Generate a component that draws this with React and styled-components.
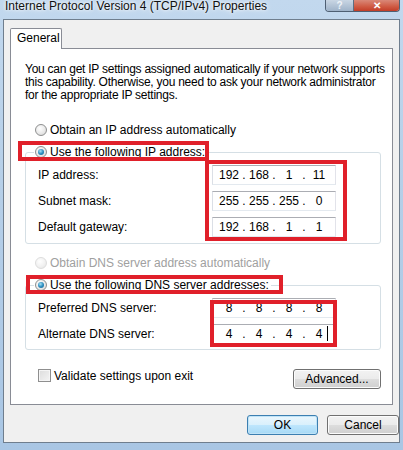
import React from 'react';
import styled, { createGlobalStyle, css } from 'styled-components';

const Global = createGlobalStyle`
  html, body { margin: 0; padding: 0; }
  body {
    width: 403px;
    height: 450px;
    overflow: hidden;
    font-family: "Liberation Sans", Arial, sans-serif;
    font-size: 12px;
    color: #000;
  }
`;

const Window = styled.div`
  width: 403px;
  height: 450px;
  box-sizing: border-box;
  display: flex;
  flex-direction: column;
  padding: 0 3px 7px 3px;
  background: linear-gradient(180deg, #c2d8ee 0%, #b6cfe8 40%, #a9c6e4 100%);
`;

const TitleBar = styled.div`
  height: 19px;
  display: flex;
  align-items: flex-start;
  justify-content: space-between;
  overflow: hidden;
`;

const Title = styled.div`
  margin-top: 0;
  margin-left: 2px;
  font-size: 12px;
  line-height: 13px;
  color: #111;
  white-space: nowrap;
  text-shadow: 0 0 6px #fff, 0 0 3px #fff;
`;

const Caption = styled.div`
  display: flex;
  border: 1px solid #4e5f73;
  border-top: none;
  border-radius: 0 0 4px 4px;
  overflow: hidden;
  height: 11px;
`;

const CaptionButton = styled.div`
  width: ${p => p.$w}px;
  height: 11px;
  display: flex;
  justify-content: center;
  align-items: flex-end;
  font-size: 10px;
  line-height: 10px;
  font-weight: bold;
  ${p => p.$close ? css`
    background: linear-gradient(180deg, #d98878 0%, #cf5a43 60%, #c23d28 100%);
    color: #fff;
  ` : css`
    background: linear-gradient(180deg, #c9d6e4 0%, #9fb3c9 100%);
    border-right: 1px solid #5d6e82;
    color: #eef3f8;
  `}
`;

const Client = styled.div`
  flex: 1;
  display: flex;
  flex-direction: column;
  background: #f0f0f0;
  border: 1px solid #6f7e8e;
  padding: 8px 6px 0 6px;
`;

const TabStrip = styled.div`
  display: flex;
  position: relative;
  z-index: 1;
  margin-bottom: -1px;
`;

const Tab = styled.div`
  border: 1px solid #898c95;
  border-bottom: none;
  background: #fff;
  padding-left: 6px;
  box-sizing: border-box;
  width: 52px;
  height: 21px;
  line-height: 19px;
  border-radius: 2px 2px 0 0;
`;

const Panel = styled.div`
  width: 383px;
  box-sizing: border-box;
  background: #fff;
  border: 1px solid #898c95;
  padding: 14px 11px 15px 14px;
  display: flex;
  flex-direction: column;
`;

const Intro = styled.p`
  margin: 0;
  line-height: 13px;
  white-space: nowrap;
  letter-spacing: -0.25px;
`;

const OptionRow = styled.label`
  display: flex;
  align-items: center;
  height: 14px;
  gap: 3px;
  margin-left: 10px;
  margin-top: ${p => p.$top || 0}px;
  color: ${p => p.$disabled ? '#a0a0a0' : '#000'};
`;

const Radio = styled.span`
  width: 12px;
  height: 12px;
  box-sizing: border-box;
  border-radius: 50%;
  border: 1px solid ${p => p.$disabled ? '#c6c6c6' : '#8e8f8f'};
  background: radial-gradient(circle at 40% 35%, #ffffff 0%, #e9e9e9 55%, #cfcfcf 100%);
  display: flex;
  align-items: center;
  justify-content: center;
  opacity: ${p => p.$disabled ? 0.6 : 1};
  &::after {
    content: '';
    display: ${p => p.$checked ? 'block' : 'none'};
    width: 6px;
    height: 6px;
    border-radius: 50%;
    background: radial-gradient(circle at 40% 35%, #a6e0f5 0%, #2d8ec0 50%, #145f8c 100%);
  }
`;

const Group = styled.div`
  margin-top: ${p => p.$top}px;
  border: 1px solid #d5dfe5;
  border-radius: 3px;
  width: 356px;
  box-sizing: border-box;
  padding: 0 0 ${p => p.$bottom}px 12px;
  display: flex;
  flex-direction: column;
`;

const Legend = styled.div`
  margin-top: -8px;
  margin-left: -4px;
  align-self: flex-start;
  background: #fff;
  padding-right: 2px;
  position: relative;
`;

const LegendRow = styled(OptionRow)`
  margin-left: 0;
  padding-left: 1px;
`;

const Body = styled.div`
  display: flex;
  margin-top: 6px;
`;

const Labels = styled.div`
  width: 174px;
  display: flex;
  flex-direction: column;
  gap: 6px;
`;

const Label = styled.div`
  height: 20px;
  display: flex;
  align-items: center;
`;

const IpBox = styled.div`
  width: 124px;
  height: 20px;
  box-sizing: border-box;
  border: 1px solid #abadb3;
  border-color: #abadb3 #e2e3ea #e3e9ef #dbdfe6;
  display: flex;
  align-items: center;
  padding-left: 4px;
  background: #fff;
`;

const Octet = styled.span`
  width: 24px;
  text-align: center;
  position: relative;
`;

const Dot = styled.span`
  width: 6px;
  text-align: center;
`;

const Caret = styled.span`
  position: absolute;
  right: 3px;
  top: -1px;
  width: 1px;
  height: 15px;
  background: #000;
`;

const Highlight = styled.div`
  position: relative;
  &::after {
    content: '';
    position: absolute;
    top: ${p => -p.$t}px;
    left: ${p => -p.$l}px;
    right: ${p => -p.$r}px;
    bottom: ${p => -p.$b}px;
    border: 4px solid #e0202a;
    pointer-events: none;
    z-index: 5;
  }
`;

const HighlightBox = styled(Highlight)`
  display: flex;
  flex-direction: column;
  gap: 6px;
`;

const Footer = styled.div`
  margin-top: 19px;
  display: flex;
  justify-content: space-between;
  align-items: flex-start;
  width: 356px;
`;

const Check = styled.label`
  display: flex;
  align-items: center;
  gap: 3px;
  margin-left: 13px;
  height: 13px;
`;

const CheckBox = styled.span`
  width: 13px;
  height: 13px;
  box-sizing: border-box;
  border: 1px solid #8f8f8f;
  background: linear-gradient(135deg, #dcdcdc 0%, #f4f4f4 100%);
  box-shadow: inset 0 0 0 1px #f5f5f5;
`;

const Button = styled.button`
  width: ${p => p.$w}px;
  height: 20px;
  box-sizing: border-box;
  font-family: inherit;
  font-size: 12px;
  color: #000;
  padding: 0;
  border-radius: 3px;
  border: 1px solid ${p => p.$default ? '#3c7fb1' : '#707070'};
  background: ${p => p.$default
    ? 'linear-gradient(180deg, #eaf6fd 0%, #d9f0fc 50%, #bee6fd 51%, #a7d9f5 100%)'
    : 'linear-gradient(180deg, #f2f2f2 0%, #ebebeb 50%, #dddddd 51%, #cfcfcf 100%)'};
  box-shadow: inset 0 0 0 1px ${p => p.$default ? '#bfe3f7' : '#fcfcfc'};
`;

const ButtonBar = styled.div`
  display: flex;
  justify-content: flex-end;
  gap: 9px;
  margin-top: 10px;
  width: 389px;
`;

const IpField = ({ parts, caret }) => (
  <IpBox>
    {parts.map((p, i) => (
      <React.Fragment key={i}>
        {i > 0 && <Dot>.</Dot>}
        <Octet>
          {p}
          {caret && i === parts.length - 1 && <Caret />}
        </Octet>
      </React.Fragment>
    ))}
  </IpBox>
);

const ipRows = [
  ['IP address:', ['192', '168', '1', '11']],
  ['Subnet mask:', ['255', '255', '255', '0']],
  ['Default gateway:', ['192', '168', '1', '1']],
];

const dnsRows = [
  ['Preferred DNS server:', ['8', '8', '8', '8']],
  ['Alternate DNS server:', ['4', '4', '4', '4'], true],
];

const AddressGroup = ({ rows, legend, legendMark, boxMark, top, bottom }) => (
  <Group $top={top} $bottom={bottom}>
    <Legend>
      <Highlight {...legendMark}>
        <LegendRow>
          <Radio $checked />
          {legend}
        </LegendRow>
      </Highlight>
    </Legend>
    <Body>
      <Labels>
        {rows.map(([label]) => <Label key={label}>{label}</Label>)}
      </Labels>
      <HighlightBox {...boxMark}>
        {rows.map(([label, parts, caret]) => (
          <IpField key={label} parts={parts} caret={caret} />
        ))}
      </HighlightBox>
    </Body>
  </Group>
);

const App = () => (
  <>
    <Global />
    <Window>
      <TitleBar>
        <Title>Internet Protocol Version 4 (TCP/IPv4) Properties</Title>
        <Caption>
          <CaptionButton $w={27}>?</CaptionButton>
          <CaptionButton $w={45} $close>✕</CaptionButton>
        </Caption>
      </TitleBar>
      <Client>
        <TabStrip>
          <Tab>General</Tab>
        </TabStrip>
        <Panel>
          <Intro>
            You can get IP settings assigned automatically if your network supports<br />
            this capability. Otherwise, you need to ask your network administrator<br />
            for the appropriate IP settings.
          </Intro>

          <OptionRow $top={21}>
            <Radio />
            Obtain an IP address automatically
          </OptionRow>

          <AddressGroup
            top={15}
            bottom={6}
            rows={ipRows}
            legend="Use the following IP address:"
            legendMark={{ $t: 4, $l: 16, $r: 4, $b: 2 }}
            boxMark={{ $t: 5, $l: 7, $r: 11, $b: 4 }}
          />

          <OptionRow $top={12} $disabled>
            <Radio $disabled />
            Obtain DNS server address automatically
          </OptionRow>

          <AddressGroup
            top={15}
            bottom={5}
            rows={dnsRows}
            legend="Use the following DNS server addresses:"
            legendMark={{ $t: 3, $l: 8, $r: 14, $b: 2 }}
            boxMark={{ $t: -2, $l: 2, $r: 1, $b: 3 }}
          />

          <Footer>
            <Check>
              <CheckBox />
              Validate settings upon exit
            </Check>
            <Button $w={88}>Advanced...</Button>
          </Footer>
        </Panel>
        <ButtonBar>
          <Button $w={71} $default>OK</Button>
          <Button $w={72}>Cancel</Button>
        </ButtonBar>
      </Client>
    </Window>
  </>
);

export default App;
